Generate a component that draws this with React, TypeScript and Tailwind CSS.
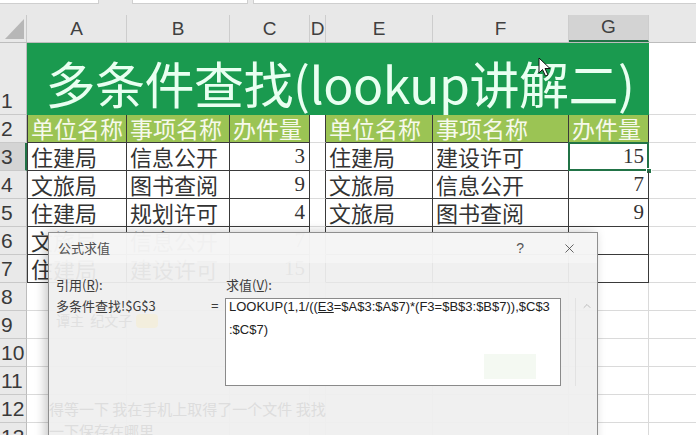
import React from 'react';
import { X, ChevronUp } from 'lucide-react';

// column letters of the sheet, widths in px
const columns = [
  { letter: 'A', w: 'w-[100px]' },
  { letter: 'B', w: 'w-[103px]' },
  { letter: 'C', w: 'w-[80px]' },
  { letter: 'D', w: 'w-[16px]' },
  { letter: 'E', w: 'w-[107px]' },
  { letter: 'F', w: 'w-[136px]' },
  { letter: 'G', w: 'w-[80px]' },
];

const leftRows = [
  ['住建局', '信息公开', '3'],
  ['文旅局', '图书查阅', '9'],
  ['住建局', '规划许可', '4'],
  ['文旅局', '信息公开', '7'],
  ['住建局', '建设许可', '15'],
];

const rightRows = [
  ['住建局', '建设许可', '15'],
  ['文旅局', '信息公开', '7'],
  ['文旅局', '图书查阅', '9'],
  ['', '', ''],
  ['', '', ''],
];

const RowHead: React.FC<{ n: number; active?: boolean }> = ({ n, active }) => (
  <div
    className={`w-[27px] shrink-0 flex items-end pl-[1px] pb-[1px] border-b border-b-[#c9c9c9] font-['Liberation_Sans',sans-serif] text-[21px] leading-[24px] text-[#3a3a3a] ${
      active ? 'bg-[#d4d4d4] border-r-2 border-r-[#217346]' : 'bg-[#e9e9e9] border-r border-r-[#bdbdbd]'
    }`}
  >
    {n}
  </div>
);

const DataRow: React.FC<{ n: number; left: string[]; right: string[]; selected?: boolean }> = ({ n, left, right, selected }) => {
  const text = "flex items-center pl-[3px] text-[22px] text-[#333] font-['Noto_Sans_CJK_SC',sans-serif] overflow-hidden whitespace-nowrap";
  const num = "flex items-center justify-end pr-[4px] text-[21px] text-[#333] font-['Liberation_Serif',serif]";
  return (
    <div className="flex h-[28px]">
      <RowHead n={n} active={selected} />
      <div className={`w-[100px] border-l border-r border-b border-[#3a3a3a] ${text}`}>{left[0]}</div>
      <div className={`w-[103px] border-r border-b border-[#3a3a3a] ${text}`}>{left[1]}</div>
      <div className={`w-[80px] border-r border-b border-[#3a3a3a] ${num}`}>{left[2]}</div>
      <div className="w-[16px] border-r border-r-[#3a3a3a] border-b border-b-[#dadada]" />
      <div className={`w-[107px] border-r border-b border-[#3a3a3a] ${text}`}>{right[0]}</div>
      <div className={`w-[136px] border-r border-b border-[#3a3a3a] ${text}`}>{right[1]}</div>
      <div className={`relative w-[80px] border-r border-b border-[#3a3a3a] ${num}`}>
        {right[2]}
        {selected && (
          <>
            <div className="absolute -left-[1px] -top-[1px] -right-[1px] -bottom-[1px] border-2 border-[#217346]" />
            <div className="absolute -right-[4px] -bottom-[4px] w-[6px] h-[6px] bg-[#217346] border border-white" />
          </>
        )}
      </div>
      <div className="flex-1 border-b border-[#dadada]" />
    </div>
  );
};

const EmptyRow: React.FC<{ n: number }> = ({ n }) => (
  <div className="flex h-[28px] shrink-0">
    <RowHead n={n} />
    {columns.map((c) => (
      <div key={c.letter} className={`${c.w} border-r border-b border-[#dadada]`} />
    ))}
    <div className="flex-1 border-b border-[#dadada]" />
  </div>
);

export default function App() {
  const head = "flex items-center pl-[3px] bg-[#9bc454] text-[23px] text-[#f6f9ec] font-['Noto_Sans_CJK_SC',sans-serif] whitespace-nowrap overflow-hidden border-r border-b border-[#3a3a3a]";

  return (
    <div className="relative w-[696px] h-[435px] overflow-hidden bg-white select-none">
      {/* formula bar strip */}
      <div className="flex h-[15px] bg-[#e8e8e8]">
        <div className="w-[99px] h-[4px] bg-white border-r border-b border-[#cfcfcf]" />
        <div className="ml-[33px] w-[116px] h-[4px] bg-white border-x border-b border-[#cfcfcf]" />
        <div className="ml-[5px] flex-1 h-[4px] bg-white border-l border-b border-[#cfcfcf]" />
      </div>

      {/* column letters */}
      <div className="flex h-[28px] bg-[#e8e8e8] border-b border-[#bdbdbd]">
        <div className="w-[27px] shrink-0 flex items-end pl-[5px] pb-[3px] border-r border-[#c9c9c9]">
          <svg width="19" height="20" viewBox="0 0 19 20">
            <polygon points="19,0 19,20 0,20" fill="#b7b7b7" />
          </svg>
        </div>
        {columns.map((c) => (
          <div
            key={c.letter}
            className={`${c.w} flex items-end justify-center pb-[2px] border-r border-[#cdcdcd] font-['Liberation_Sans',sans-serif] text-[19px] leading-[22px] text-[#404040] overflow-hidden ${
              c.letter === 'G' ? 'bg-[#d3d3d3] border-b-2 border-b-[#217346]' : ''
            }`}
          >
            {c.letter}
          </div>
        ))}
        <div className="flex-1" />
      </div>

      {/* row 1: title */}
      <div className="flex h-[72px]">
        <RowHead n={1} />
        <div className="w-[622px] flex items-center justify-center pt-[6px] pl-[4px] bg-[#1a9a4f] text-[50px] leading-none tracking-[-0.5px] text-[#e9fff1] font-['Noto_Sans_CJK_SC',sans-serif] whitespace-nowrap">
          多条件查找(lookup讲解二)
        </div>
        <div className="flex-1 border-b border-[#dadada]" />
      </div>

      {/* row 2: headers */}
      <div className="flex h-[28px]">
        <RowHead n={2} />
        <div className={`w-[100px] border-l ${head}`}>单位名称</div>
        <div className={`w-[103px] ${head}`}>事项名称</div>
        <div className={`w-[80px] ${head}`}>办件量</div>
        <div className="w-[16px] border-r border-r-[#3a3a3a] border-b border-b-[#dadada]" />
        <div className={`w-[107px] ${head}`}>单位名称</div>
        <div className={`w-[136px] ${head}`}>事项名称</div>
        <div className={`w-[80px] ${head}`}>办件量</div>
        <div className="flex-1 border-b border-[#dadada]" />
      </div>

      {leftRows.map((l, i) => (
        <DataRow key={i} n={i + 3} left={l} right={rightRows[i]} selected={i === 0} />
      ))}

      {[8, 9, 10, 11, 12, 13].map((n) => (
        <EmptyRow key={n} n={n} />
      ))}

      {/* mouse pointer */}
      <svg className="absolute left-[538px] top-[57px]" width="14" height="21" viewBox="0 0 14 21">
        <path d="M1 1 L1 16 L4.5 12.5 L7.5 19 L10 18 L7 11.5 L12 11.5 Z" fill="#fff" stroke="#111" strokeWidth="1" strokeLinejoin="round" />
      </svg>

      {/* 公式求值 dialog, fading in over the sheet */}
      <div className="absolute left-[48px] top-[232px] w-[550px] h-[215px] border border-[#8f8f8f] shadow-[-3px_0_10px_rgba(0,0,0,0.22)] bg-[#efefef]/[0.94] font-['Noto_Sans_CJK_SC',sans-serif] text-[#3c3c3c]">
        <div className="flex items-center h-[30px] pl-[9px] pr-[20px] bg-[#f8f8f8]/[0.6] text-[13px] text-[#505050]">
          <span>公式求值</span>
          <span className="ml-auto mr-[38px] text-[14px] text-[#555] font-['Liberation_Sans',sans-serif]">?</span>
          <X size={15} strokeWidth={1.3} color="#444" />
        </div>

        <div className="relative pl-[7px] pt-[14px]">
          <div className="flex h-[16px] items-center text-[13px] leading-[16px]">
            <div className="w-[170px]">
              引用(<span className="underline">R</span>):
            </div>
            <div>
              求值(<span className="underline">V</span>):
            </div>
          </div>

          <div className="mt-[5px] flex">
            <div className="w-[155px] text-[13px] leading-[16px] whitespace-nowrap">多条件查找!$G$3</div>
            <div className="w-[14px] text-[13px] leading-[16px] font-['Liberation_Sans',sans-serif]">=</div>
            <div className="relative w-[336px] h-[88px] bg-white border border-[#8a8a8a] pl-[3px] font-['Liberation_Sans',sans-serif] text-[13px] leading-[23px] text-[#222]">
              <div className="-mt-[4px]">
                LOOKUP(1,1/((<span className="underline">E3</span>=$A$3:$A$7)*(F3=$B$3:$B$7)),$C$3
                <br />
                :$C$7)
              </div>
              <div className="absolute left-[258px] top-[55px] w-[52px] h-[25px] bg-[#f4f9f2]" />
            </div>
            <div className="ml-[14px] w-[22px] flex justify-center border-l border-[#e2e2e2] pt-[2px]">
              <ChevronUp size={12} strokeWidth={1.4} color="#a8a8a8" />
            </div>
          </div>

          {/* faint video captions */}
          <div className="absolute left-[7px] top-[47px] flex items-center gap-[4px] text-[14px] text-[#e0e0e0]">
            <span>谭主&nbsp;&nbsp;纪文子</span>
            <span className="w-[22px] h-[14px] rounded bg-[#f3eedd]" />
          </div>
          <div className="absolute left-[0px] top-[135px] text-[15px] leading-[22px] text-[#dddddd] whitespace-nowrap">
            得等一下 我在手机上取得了一个文件 我找
            <br />
            一下保存在哪里
          </div>
        </div>
      </div>
    </div>
  );
}
